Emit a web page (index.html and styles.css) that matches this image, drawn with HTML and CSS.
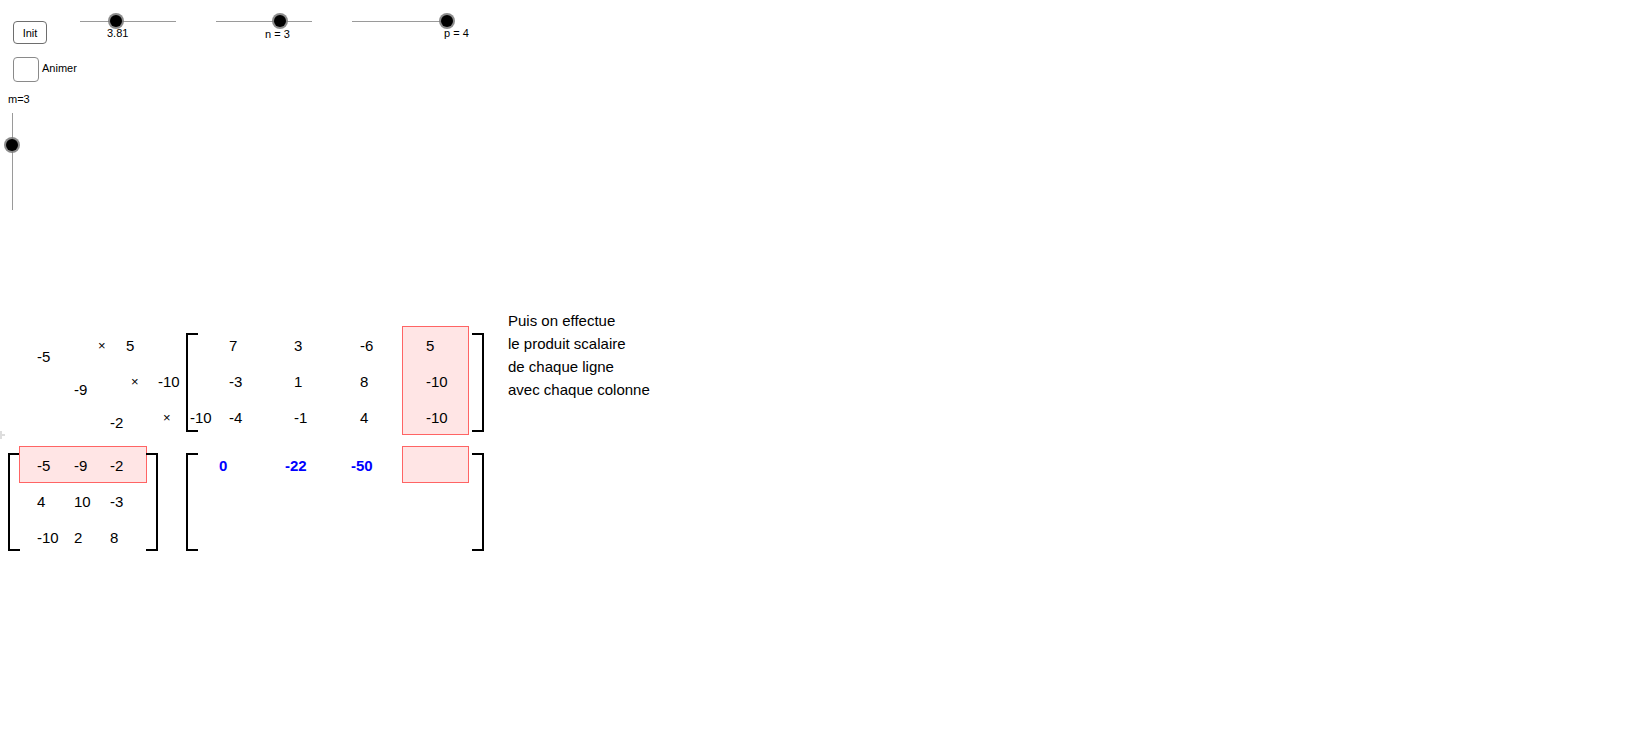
FILE: index.html
```html
<!DOCTYPE html>
<html lang="fr">
<head>
<meta charset="utf-8">
<title>Produit de matrices</title>
<link rel="stylesheet" href="styles.css">
</head>
<body>
<div class="canvas">
  <button class="btn-init">Init</button>

  <div class="slider h s1"><div class="knob"></div></div>
  <span class="lbl lb1">3.81</span>
  <div class="slider h s2"><div class="knob"></div></div>
  <span class="lbl lb2">n = 3</span>
  <div class="slider h s3"><div class="knob"></div></div>
  <span class="lbl lb3">p = 4</span>

  <div class="check"></div>
  <span class="lbl lb-anim">Animer</span>
  <span class="lbl lb-m">m=3</span>
  <div class="slider v s4"><div class="knob"></div></div>

  <svg class="cross" width="10" height="10" viewBox="0 0 10 10"><path d="M0 5H8M4 1V9" stroke="#ddd" stroke-width="2"/></svg>

  <span class="num d1">-5</span>
  <span class="times t1">×</span><span class="num d1b">5</span>
  <span class="num d2">-9</span>
  <span class="times t2">×</span><span class="num d2b">-10</span>
  <span class="num d3">-2</span>
  <span class="times t3">×</span><span class="num d3b">-10</span>

  <div class="matrix mB">
    <div class="hl hlB"></div>
    <div class="grid gB">
      <span>7</span><span>3</span><span>-6</span><span>5</span>
      <span>-3</span><span>1</span><span>8</span><span>-10</span>
      <span>-4</span><span>-1</span><span>4</span><span>-10</span>
    </div>
  </div>

  <div class="matrix mA">
    <div class="hl hlA"></div>
    <div class="grid gA">
      <span>-5</span><span>-9</span><span>-2</span>
      <span>4</span><span>10</span><span>-3</span>
      <span>-10</span><span>2</span><span>8</span>
    </div>
  </div>

  <div class="matrix mC">
    <div class="hl hlC"></div>
    <div class="grid gC">
      <span>0</span><span>-22</span><span>-50</span>
    </div>
  </div>

  <p class="note">Puis on effectue<br>le produit scalaire<br>de chaque ligne<br>avec chaque colonne</p>
</div>
</body>
</html>
```

FILE: styles.css
```css
html, body {
  margin: 0;
  padding: 0;
  background: #fff;
}

.canvas {
  position: relative;
  width: 1646px;
  height: 742px;
  overflow: hidden;
  background: #fff;
  font-family: "Liberation Sans", Arial, sans-serif;
  color: #000;
}

/* controls */
.btn-init {
  position: absolute;
  left: 13px;
  top: 21px;
  width: 34px;
  height: 23px;
  padding: 0;
  margin: 0;
  background: #fff;
  border: 1.5px solid #6e6e6e;
  border-radius: 4px;
  font-family: "Liberation Sans", Arial, sans-serif;
  font-size: 11px;
  color: #000;
}

.check {
  position: absolute;
  left: 13px;
  top: 57px;
  width: 24px;
  height: 23px;
  border: 1.5px solid #8a8a8a;
  border-radius: 4px;
  background: #fff;
}

.lbl {
  position: absolute;
  font-size: 11px;
  line-height: 13px;
  white-space: nowrap;
}
.lb1 { left: 107px; top: 27px; }
.lb2 { left: 265px; top: 28px; }
.lb3 { left: 444px; top: 27px; }
.lb-anim { left: 42px; top: 62px; }
.lb-m { left: 8px; top: 93px; }

.slider {
  position: absolute;
}
.slider.h {
  height: 0;
  border-top: 1px solid #9a9a9a;
  width: 96px;
}
.slider.v {
  width: 0;
  border-left: 1px solid #9a9a9a;
  height: 97px;
}
.s1 { left: 80px; top: 21px; }
.s2 { left: 216px; top: 21px; }
.s3 { left: 352px; top: 21px; }
.s4 { left: 12px; top: 113px; }

.knob {
  position: absolute;
  width: 12px;
  height: 12px;
  border-radius: 50%;
  background: #000;
  box-shadow: 0 0 0 2px rgba(120, 120, 120, 0.85);
}
.s1 .knob { left: 30px; top: -7px; }
.s2 .knob { left: 58px; top: -7px; }
.s3 .knob { left: 89px; top: -7px; }
.s4 .knob { left: -7px; top: 26px; }

.cross {
  position: absolute;
  left: -3px;
  top: 430px;
}

/* loose numbers on the canvas */
.num {
  position: absolute;
  font-size: 15px;
  line-height: 18px;
  white-space: nowrap;
}
.times {
  position: absolute;
  font-size: 13px;
  line-height: 18px;
}
.d1 { left: 37px; top: 348px; }
.t1 { left: 98px; top: 337px; }
.d1b { left: 126px; top: 337px; }
.d2 { left: 74px; top: 381px; }
.t2 { left: 131px; top: 373px; }
.d2b { left: 158px; top: 373px; }
.d3 { left: 110px; top: 414px; }
.t3 { left: 163px; top: 409px; }
.d3b { left: 190px; top: 409px; }

/* matrices */
.matrix {
  position: absolute;
  height: 108px;
}
.matrix::before,
.matrix::after {
  content: "";
  position: absolute;
  top: 5px;
  bottom: 4px;
  width: 10px;
  border: solid #000;
}
.matrix::before {
  left: 0;
  border-width: 2.5px 0 2.5px 2.5px;
}
.matrix::after {
  right: 0;
  border-width: 2.5px 2.5px 2.5px 0;
}

.hl {
  position: absolute;
  box-sizing: border-box;
  background: #ffe5e5;
  border: 1.5px solid #ff6464;
}

.grid {
  position: relative;
  display: grid;
  grid-auto-rows: 36px;
  font-size: 15px;
  line-height: 36px;
  white-space: nowrap;
}

.mB { left: 186px; top: 328px; width: 298px; }
.hlB { left: 216px; top: -2px; width: 67px; height: 109px; }
.gB {
  grid-template-columns: 65px 66px 66px auto;
  padding-left: 43px;
}

.mA { left: 8px; top: 448px; width: 150px; }
.mA::before, .mA::after { bottom: 5px; }
.hlA { left: 11px; top: -2px; width: 128px; height: 37px; }
.gA {
  grid-template-columns: 37px 36px auto;
  padding-left: 29px;
}

.mC { left: 186px; top: 448px; width: 298px; }
.mC::before, .mC::after { bottom: 5px; }
.hlC { left: 216px; top: -2px; width: 67px; height: 37px; }
.gC {
  grid-template-columns: 66px 66px auto;
  padding-left: 33px;
  color: #0000ff;
  font-weight: bold;
}

.note {
  position: absolute;
  left: 508px;
  top: 309px;
  margin: 0;
  font-size: 15px;
  line-height: 23px;
}
```
